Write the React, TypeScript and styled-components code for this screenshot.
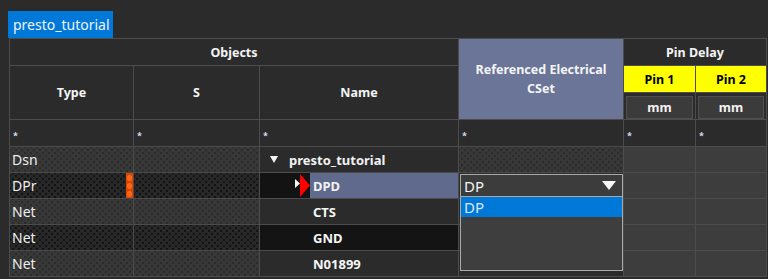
import React from "react"
import styled, { createGlobalStyle, css } from "styled-components"

const GlobalStyle = createGlobalStyle`
  html, body {
    margin: 0;
    padding: 0;
    background: #2b2b2b;
  }
  body {
    font-family: "Noto Sans", "Open Sans", sans-serif;
    color: #f2f2f2;
    overflow: hidden;
  }
`

const Page = styled.div`
  width: 768px;
  height: 279px;
  padding: 11px 0 0 8px;
  box-sizing: border-box;
`

const Tab = styled.div`
  display: inline-flex;
  align-items: center;
  height: 27px;
  width: 105px;
  box-sizing: border-box;
  padding-left: 5px;
  background: #0078d7;
  color: #eef4ff;
  font-size: 14px;
`

const Grid = styled.div`
  display: grid;
  margin-left: 1px;
  width: 758px;
  box-sizing: border-box;
  grid-template-columns: 123px 125px 198px 164px 71px 70px;
  grid-template-rows: 26px 26px 26px 26px 25px 25px 25px 25px 25px;
  gap: 1px;
  padding: 1px;
  background: #4c4c4c;
`

const HeadCell = styled.div<{ $col: string; $row: string; $bg?: string; $dark?: boolean }>`
  grid-column: ${({ $col }) => $col};
  grid-row: ${({ $row }) => $row};
  display: flex;
  align-items: center;
  justify-content: center;
  text-align: center;
  font-size: 12.5px;
  font-weight: 700;
  line-height: 19px;
  background: ${({ $bg }) => $bg ?? "#2b2b2b"};
  color: ${({ $dark }) => ($dark ? "#000" : "#f4f4f4")};
`

const UnitCell = styled.div`
  background: #2b2b2b;
  padding: 3px 2px 0 2px;
  display: flex;
`

const UnitBox = styled.div`
  flex: 1;
  display: flex;
  align-items: center;
  justify-content: center;
  background: #3b3b3b;
  border: 1px solid #4f4f4f;
  font-size: 12.5px;
  font-weight: 700;
`

const FilterCell = styled.div`
  background: #2b2b2b;
  display: flex;
  align-items: center;
  padding-left: 3px;
  font-size: 9px;
  font-weight: 700;
  color: #d8dcf0;
  padding-top: 4px;
`

const hatch = (base: string, dot: string) => css`
  background-color: ${base};
  background-image: radial-gradient(circle, ${dot} 1.8px, transparent 2.6px),
    radial-gradient(circle, ${dot} 1.8px, transparent 2.6px);
  background-size: 6px 6px;
  background-position: 0 0, 3px 3px;
`

const Cell = styled.div<{ $tone: "light" | "dark"; $hatched?: boolean }>`
  display: flex;
  align-items: center;
  font-size: 14px;
  color: #eeeeee;
  padding-left: 2px;
  position: relative;
  ${({ $tone, $hatched }) =>
    $hatched
      ? $tone === "light"
        ? hatch("#2a2a2a", "#383838")
        : hatch("#101010", "#282828")
      : css`
          background: ${$tone === "light" ? "#2b2b2b" : "#131313"};
        `}
`

const TypeCell = styled(Cell)`
  justify-content: space-between;
`

const Marker = styled.div`
  width: 7px;
  align-self: stretch;
  background-color: #d84800;
  background-image: radial-gradient(circle, #ff6414 2.6px, transparent 3px);
  background-size: 7px 8px;
  background-position: 0 1px;
`

const NameCell = styled.div<{ $bg: string }>`
  display: flex;
  align-items: center;
  background: ${({ $bg }) => $bg};
  font-size: 13px;
  font-weight: 700;
  color: #f6f6f6;
  padding-left: 53px;
`

const TreeRoot = styled.div`
  display: flex;
  align-items: center;
  background: #2b2b2b;
  font-size: 13px;
  font-weight: 700;
  padding-left: 10px;
  gap: 11px;
`

const SelectedName = styled.div`
  display: flex;
  align-items: stretch;
  background: #131313;
  padding-left: 35px;
`

const RowArrow = styled.div`
  display: flex;
  align-items: center;
  width: 15px;
`

const Highlight = styled.div`
  flex: 1;
  display: flex;
  align-items: center;
  background: #5f6a8c;
  font-size: 13px;
  font-weight: 700;
  padding-left: 3px;
`

const PinCell = styled.div`
  background: #3d3d3d;
`

const RefCell = styled.div<{ $hatched?: boolean }>`
  position: relative;
  ${({ $hatched }) => ($hatched ? hatch("#2a2a2a", "#383838") : css`background: #2b2b2b;`)}
`

const Dropdown = styled.div`
  position: absolute;
  top: 1px;
  left: 1px;
  right: 0;
  z-index: 5;
  display: flex;
  flex-direction: column;
`

const Combo = styled.div`
  height: 23px;
  box-sizing: border-box;
  border: 1px solid #a9a9a9;
  background: #3c3c3c;
  display: flex;
  align-items: center;
  justify-content: space-between;
  padding: 0 6px 0 3px;
  font-size: 15px;
  color: #f4f4f4;
`

const List = styled.div`
  height: 74px;
  box-sizing: border-box;
  border: 1px solid #a9a9a9;
  border-top: none;
  background: #3e3e3e;
`

const Option = styled.div<{ $active?: boolean }>`
  height: 20px;
  display: flex;
  align-items: center;
  padding-left: 3px;
  font-size: 15px;
  color: #dde8ff;
  background: ${({ $active }) => ($active ? "#0078d7" : "transparent")};
`

const rows = [
  { type: "Dsn", tone: "light" as const },
  { type: "DPr", tone: "dark" as const },
  { type: "Net", tone: "light" as const, name: "CTS", bg: "#2b2b2b" },
  { type: "Net", tone: "dark" as const, name: "GND", bg: "#141414" },
  { type: "Net", tone: "light" as const, name: "N01899", bg: "#2b2b2b" },
]

export default function App() {
  return (
    <Page>
      <GlobalStyle />
      <Tab>presto_tutorial</Tab>
      <Grid>
        <HeadCell $col="1 / 4" $row="1">Objects</HeadCell>
        <HeadCell $col="4" $row="1 / 4" $bg="#6a7597">
          Referenced Electrical
          <br />
          CSet
        </HeadCell>
        <HeadCell $col="5 / 7" $row="1">Pin Delay</HeadCell>
        <HeadCell $col="1" $row="2 / 4">Type</HeadCell>
        <HeadCell $col="2" $row="2 / 4">S</HeadCell>
        <HeadCell $col="3" $row="2 / 4">Name</HeadCell>
        <HeadCell $col="5" $row="2" $bg="#ffff00" $dark>Pin 1</HeadCell>
        <HeadCell $col="6" $row="2" $bg="#ffff00" $dark>Pin 2</HeadCell>
        <UnitCell><UnitBox>mm</UnitBox></UnitCell>
        <UnitCell><UnitBox>mm</UnitBox></UnitCell>

        {Array.from({ length: 6 }).map((_, i) => (
          <FilterCell key={i}>*</FilterCell>
        ))}

        {rows.map((r, i) => (
          <React.Fragment key={i}>
            <TypeCell $tone={r.tone} $hatched>
              {r.type}
              {i === 1 && <Marker />}
            </TypeCell>
            <Cell $tone={r.tone} $hatched />
            {i === 0 ? (
              <TreeRoot>
                <svg width="8" height="7" viewBox="0 0 8 7">
                  <path d="M0 0 H8 L4 7 Z" fill="#f4f4f4" />
                </svg>
                presto_tutorial
              </TreeRoot>
            ) : i === 1 ? (
              <SelectedName>
                <RowArrow>
                  <svg width="15" height="25" viewBox="0 0 15 25">
                    <path d="M0 6 L5 10.5 L0 15 Z" fill="#f4f4f4" />
                    <path d="M5 1 L15 12.5 L5 24 Z" fill="#ff0000" />
                  </svg>
                </RowArrow>
                <Highlight>DPD</Highlight>
              </SelectedName>
            ) : (
              <NameCell $bg={r.bg!}>{r.name}</NameCell>
            )}
            <RefCell $hatched={i === 0}>
              {i === 1 && (
                <Dropdown>
                  <Combo>
                    DP
                    <svg width="14" height="9" viewBox="0 0 14 9">
                      <path d="M0 0 H14 L7 9 Z" fill="#f8f8f8" />
                    </svg>
                  </Combo>
                  <List>
                    <Option $active>DP</Option>
                  </List>
                </Dropdown>
              )}
            </RefCell>
            <PinCell />
            <PinCell />
          </React.Fragment>
        ))}
      </Grid>
    </Page>
  )
}
